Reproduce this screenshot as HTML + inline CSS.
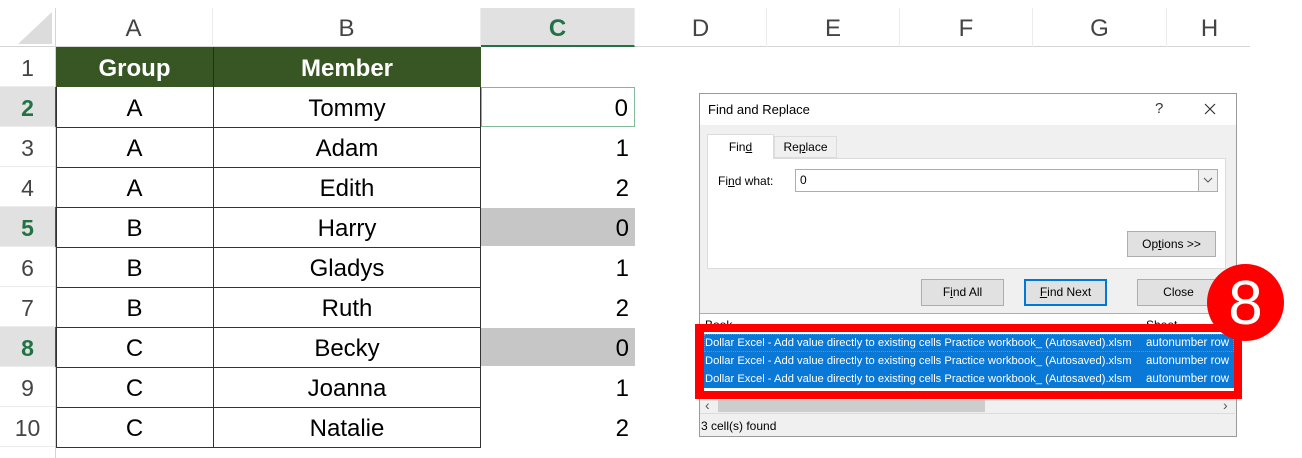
<!DOCTYPE html>
<html><head><meta charset="utf-8"><style>
*{margin:0;padding:0;box-sizing:border-box}
body{width:1302px;height:458px;background:#fff;position:relative;overflow:hidden;font-family:"Liberation Sans",Arial,sans-serif}
.a{position:absolute}
.ch{position:absolute;top:8px;height:39px;font-size:24px;color:#444;text-align:center;line-height:41px;border-right:1px solid #ececec}
.rh{position:absolute;left:0;width:55px;height:40px;font-size:23px;color:#444;text-align:center;line-height:42px;border-bottom:1px solid #ececec}
.rh.s{background:#e1e1e1;color:#217346;font-weight:bold}
.c{position:absolute;height:40px;line-height:43px;font-size:24px;color:#000;text-align:center}
.n{position:absolute;left:481px;width:154px;height:40px;line-height:43px;font-size:24px;text-align:right;padding-right:6px}
.dl{font-family:"Liberation Sans",sans-serif;font-size:12px;color:#000}
.btn{position:absolute;top:279px;height:27px;background:#e1e1e1;border:1px solid #adadad;font-size:12px;text-align:center;line-height:25px}
.row{position:absolute;left:704px;width:530px;height:18px;background:#0a78d7;color:#fff;font-size:11.2px;line-height:18px;white-space:nowrap;overflow:hidden}
.row .s2{position:absolute;left:442px;top:0;font-size:11.5px}
</style></head><body>
<svg class="a" style="left:14px;top:10px" width="40" height="36"><polygon points="38,2 38,34 4,34" fill="#dcdcdc"/></svg>
<div class="a" style="left:0;top:46px;width:1250px;height:1px;background:#d4d4d4"></div>
<div class="ch" style="left:55px;width:158px">A</div>
<div class="ch" style="left:213px;width:268px">B</div>
<div class="ch" style="left:481px;width:154px;background:#e1e1e1;color:#217346;font-weight:bold;border-bottom:2px solid #217346">C</div>
<div class="ch" style="left:635px;width:132px">D</div>
<div class="ch" style="left:767px;width:133px">E</div>
<div class="ch" style="left:900px;width:133px">F</div>
<div class="ch" style="left:1033px;width:134px">G</div>
<div class="ch" style="left:1167px;width:85px;border-right:none">H</div>
<div class="a" style="left:55px;top:8px;width:1px;height:450px;background:#d4d4d4"></div>
<div class="rh" style="top:47px">1</div>
<div class="rh s" style="top:87px">2</div>
<div class="rh" style="top:127px">3</div>
<div class="rh" style="top:167px">4</div>
<div class="rh s" style="top:207px">5</div>
<div class="rh" style="top:247px">6</div>
<div class="rh" style="top:287px">7</div>
<div class="rh s" style="top:327px">8</div>
<div class="rh" style="top:367px">9</div>
<div class="rh" style="top:407px">10</div>
<div class="a" style="left:55px;top:87px;width:2px;height:40px;background:#217346"></div>
<div class="a" style="left:55px;top:207px;width:2px;height:40px;background:#217346"></div>
<div class="a" style="left:55px;top:327px;width:2px;height:40px;background:#217346"></div>
<div class="a" style="left:56px;top:47px;width:425px;height:40px;background:#375623"></div>
<div class="a" style="left:213px;top:47px;width:1px;height:40px;background:#1f3214"></div>
<div class="c" style="left:56px;top:47px;width:157px;color:#fff;font-weight:bold">Group</div>
<div class="c" style="left:213px;top:47px;width:268px;color:#fff;font-weight:bold">Member</div>
<div class="a" style="left:56px;top:87px;width:425px;height:361px;border:1px solid #333;border-top:none"></div>
<div class="a" style="left:213px;top:87px;width:1px;height:360px;background:#333"></div>
<div class="a" style="left:56px;top:127px;width:425px;height:1px;background:#333"></div>
<div class="a" style="left:56px;top:167px;width:425px;height:1px;background:#333"></div>
<div class="a" style="left:56px;top:207px;width:425px;height:1px;background:#333"></div>
<div class="a" style="left:56px;top:247px;width:425px;height:1px;background:#333"></div>
<div class="a" style="left:56px;top:287px;width:425px;height:1px;background:#333"></div>
<div class="a" style="left:56px;top:327px;width:425px;height:1px;background:#333"></div>
<div class="a" style="left:56px;top:367px;width:425px;height:1px;background:#333"></div>
<div class="a" style="left:56px;top:407px;width:425px;height:1px;background:#333"></div>
<div class="c" style="left:56px;top:87px;width:157px">A</div><div class="c" style="left:213px;top:87px;width:268px">Tommy</div>
<div class="c" style="left:56px;top:127px;width:157px">A</div><div class="c" style="left:213px;top:127px;width:268px">Adam</div>
<div class="c" style="left:56px;top:167px;width:157px">A</div><div class="c" style="left:213px;top:167px;width:268px">Edith</div>
<div class="c" style="left:56px;top:207px;width:157px">B</div><div class="c" style="left:213px;top:207px;width:268px">Harry</div>
<div class="c" style="left:56px;top:247px;width:157px">B</div><div class="c" style="left:213px;top:247px;width:268px">Gladys</div>
<div class="c" style="left:56px;top:287px;width:157px">B</div><div class="c" style="left:213px;top:287px;width:268px">Ruth</div>
<div class="c" style="left:56px;top:327px;width:157px">C</div><div class="c" style="left:213px;top:327px;width:268px">Becky</div>
<div class="c" style="left:56px;top:367px;width:157px">C</div><div class="c" style="left:213px;top:367px;width:268px">Joanna</div>
<div class="c" style="left:56px;top:407px;width:157px">C</div><div class="c" style="left:213px;top:407px;width:268px">Natalie</div>
<div class="n" style="top:87px;border:1px solid #7fb99a;line-height:41px">0</div>
<div class="n" style="top:127px">1</div>
<div class="n" style="top:167px">2</div>
<div class="n" style="top:208px;height:38px;background:#c6c6c6;line-height:41px">0</div>
<div class="n" style="top:247px">1</div>
<div class="n" style="top:287px">2</div>
<div class="n" style="top:328px;height:38px;background:#c6c6c6;line-height:41px">0</div>
<div class="n" style="top:367px">1</div>
<div class="n" style="top:407px">2</div>
<div class="a" style="left:699px;top:93px;width:538px;height:344px;background:#f0f0f0;border:1px solid #9a9a9a"></div>
<div class="a" style="left:700px;top:94px;width:536px;height:31px;background:#fff"></div>
<div class="a dl" style="left:708px;top:102px;font-size:13px">Find and Replace</div>
<div class="a dl" style="left:1155px;top:100px;font-size:15px;color:#333">?</div>
<svg class="a" style="left:1204px;top:103px" width="12" height="12"><path d="M1 1L11 11M11 1L1 11" stroke="#333" stroke-width="1.2"/></svg>
<div class="a" style="left:707px;top:158px;width:519px;height:111px;background:#fff;border:1px solid #dcdcdc"></div>
<div class="a dl" style="left:707px;top:134px;width:67px;height:25px;background:#fff;border:1px solid #dcdcdc;border-bottom:none;text-align:center;line-height:24px">Fin<u>d</u></div>
<div class="a dl" style="left:774px;top:136px;width:63px;height:22px;background:#f0f0f0;border:1px solid #dcdcdc;text-align:center;line-height:21px">Re<u>p</u>lace</div>
<div class="a dl" style="left:718px;top:174px">Fi<u>n</u>d what:</div>
<div class="a" style="left:795px;top:169px;width:423px;height:23px;border:1px solid #adadad;background:#fff"></div>
<div class="a dl" style="left:800px;top:173px">0</div>
<div class="a" style="left:1198px;top:170px;width:19px;height:21px;background:#f0f0f0;border-left:1px solid #adadad"></div>
<svg class="a" style="left:1203px;top:177px" width="10" height="6"><path d="M1 1L5 5L9 1" stroke="#555" fill="none"/></svg>
<div class="btn dl" style="left:1127px;top:231px;width:89px;height:26px">Op<u>t</u>ions &gt;&gt;</div>
<div class="btn dl" style="left:921px;width:83px">F<u>i</u>nd All</div>
<div class="btn dl" style="left:1024px;width:83px;border:2px solid #0078d7;line-height:23px"><u>F</u>ind Next</div>
<div class="btn dl" style="left:1137px;width:83px">Close</div>
<div class="a" style="left:700px;top:313px;width:535px;height:101px;background:#fff;border-top:1px solid #adadad;border-bottom:1px solid #dcdcdc"></div>
<div class="a dl" style="left:705px;top:318px">Book</div>
<div class="a dl" style="left:1146px;top:318px">Sheet</div>
<div class="a" style="left:700px;top:399px;width:535px;height:14px;background:#f0f0f0"></div>
<div class="a" style="left:718px;top:400px;width:267px;height:12px;background:#cdcdcd"></div>
<div class="a dl" style="left:705px;top:397px;font-size:14px;color:#555">‹</div>
<div class="a dl" style="left:1223px;top:397px;font-size:14px;color:#555">›</div>
<div class="a dl" style="left:701px;top:419px">3 cell(s) found</div>
<div class="row" style="top:334px;outline:1px dotted #888;outline-offset:-1px"><span style="padding-left:1px">Dollar Excel - Add value directly to existing cells Practice workbook_ (Autosaved).xlsm</span><span class="s2">autonumber row</span></div>
<div class="row" style="top:352px"><span style="padding-left:1px">Dollar Excel - Add value directly to existing cells Practice workbook_ (Autosaved).xlsm</span><span class="s2">autonumber row</span></div>
<div class="row" style="top:370px"><span style="padding-left:1px">Dollar Excel - Add value directly to existing cells Practice workbook_ (Autosaved).xlsm</span><span class="s2">autonumber row</span></div>
<div class="a" style="left:695px;top:324px;width:547px;height:75px;border:8px solid #ff0000;border-left-width:9px"></div>
<div class="a" style="left:1207px;top:264px;width:77px;height:77px;border-radius:50%;background:#ff0000;color:#fff;font-size:62px;text-align:center;line-height:80px">8</div>
</body></html>
